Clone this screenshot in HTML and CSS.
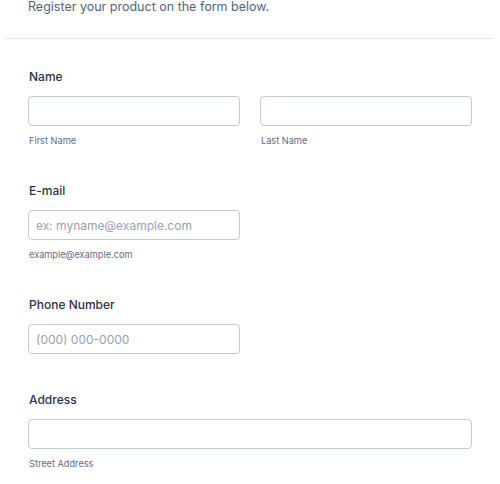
FILE: index.html
```html
<!DOCTYPE html>
<html lang="en">
<head>
<meta charset="utf-8">
<title>Product Registration</title>
<link rel="stylesheet" href="styles.css">
</head>
<body>
<div class="form">
  <header class="form-header">
    <p class="form-subheader">Register your product on the form below.</p>
  </header>
  <ul class="fields">
    <li class="field">
      <label class="field-label">Name</label>
      <div class="row-2">
        <div class="sub">
          <input class="input" type="text">
          <span class="sublabel">First Name</span>
        </div>
        <div class="sub">
          <input class="input" type="text">
          <span class="sublabel">Last Name</span>
        </div>
      </div>
    </li>
    <li class="field">
      <label class="field-label">E-mail</label>
      <div class="row-2">
        <div class="sub">
          <input class="input" type="email" placeholder="ex: myname@example.com">
          <span class="sublabel">example@example.com</span>
        </div>
      </div>
    </li>
    <li class="field field--nosub">
      <label class="field-label">Phone Number</label>
      <div class="row-2">
        <div class="sub">
          <input class="input" type="tel" placeholder="(000) 000-0000">
        </div>
      </div>
    </li>
    <li class="field">
      <label class="field-label">Address</label>
      <div class="sub">
        <input class="input" type="text">
        <span class="sublabel">Street Address</span>
      </div>
    </li>
  </ul>
</div>
</body>
</html>
```

FILE: styles.css
```css
* { box-sizing: border-box; }

html, body {
  margin: 0;
  padding: 0;
  background: #ffffff;
  font-family: Inter, "Noto Sans", "Liberation Sans", sans-serif;
  color: #2c3345;
  overflow: hidden;
}

.form {
  margin: 0 6px;
}

.form-header {
  padding: 0 22px;
  border-bottom: 1px solid #e4e6ee;
  height: 39px;
}

.form-subheader {
  margin: 0;
  font-size: 12.5px;
  line-height: 13px;
  color: #57647e;
}

.fields {
  list-style: none;
  margin: 0;
  padding: 28px 22px 0;
}

.field {
  padding-bottom: 33px;
}

.field--nosub {
  padding-bottom: 36px;
}

.field-label {
  display: block;
  font-size: 12px;
  font-weight: 500;
  line-height: 20px;
  color: #2c3345;
  margin: 0 0 9px 1px;
}

.row-2 {
  display: grid;
  grid-template-columns: 212px 212px;
  column-gap: 20px;
}

.sub {
  display: flex;
  flex-direction: column;
}

.input {
  display: block;
  width: 100%;
  height: 30px;
  margin: 0;
  padding: 0 7px;
  border: 1px solid #c3cad8;
  border-radius: 4px;
  background: #ffffff;
  font-family: inherit;
  font-size: 12px;
  color: #2c3345;
  outline: none;
}

.input::placeholder {
  color: #9aa1b3;
}

.sublabel {
  display: block;
  margin: 7px 0 0 1px;
  font-size: 9.2px;
  line-height: 15px;
  color: #5f6b84;
}
```
